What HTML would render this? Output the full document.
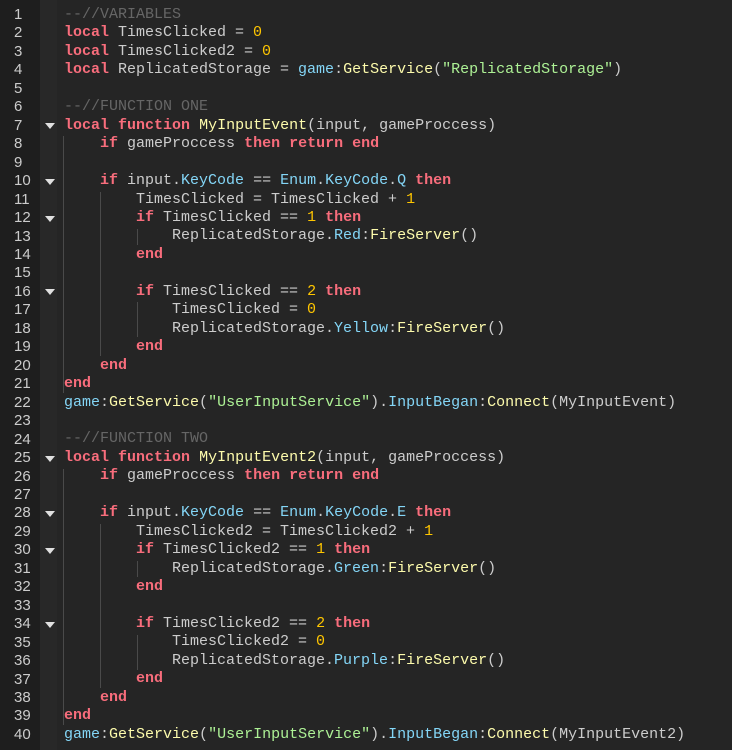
<!DOCTYPE html>
<html><head><meta charset="utf-8"><style>
html,body{margin:0;padding:0;}
body{width:732px;height:750px;background:#252525;position:relative;overflow:hidden;font-family:"Liberation Mono",monospace;font-size:15px;}
#nums{position:absolute;left:0;top:0;width:40px;height:750px;background:#1e1e1e;}
#fold{position:absolute;left:40px;top:0;width:17px;height:750px;background:#282828;}
.ln{position:absolute;left:14px;color:#cccccc;line-height:18.46px;font-family:"Liberation Sans",sans-serif;font-size:15px;}
.arr{position:absolute;left:45px;width:0;height:0;border-left:5px solid transparent;border-right:5px solid transparent;border-top:6px solid #e0e0e0;}
.g{position:absolute;width:1px;background:#4a4a4a;}
#code{position:absolute;left:64px;top:6px;margin:0;color:#cccccc;line-height:18.46px;white-space:pre;font-family:"Liberation Mono",monospace;font-size:15px;}
.k{color:#f86d7c;font-weight:bold}.c{color:#666666}.n{color:#ffc600}.s{color:#adf195}.b{color:#84d6f7}.y{color:#fdfbac}
</style></head><body>
<div id="nums"></div><div id="fold"></div>
<div id="ln"></div>
<pre id="code"><span class="c">--//VARIABLES</span>
<span class="k">local</span> TimesClicked = <span class="n">0</span>
<span class="k">local</span> TimesClicked2 = <span class="n">0</span>
<span class="k">local</span> ReplicatedStorage = <span class="b">game</span>:<span class="y">GetService</span>(<span class="s">"ReplicatedStorage"</span>)

<span class="c">--//FUNCTION ONE</span>
<span class="k">local</span> <span class="k">function</span> <span class="y">MyInputEvent</span>(input, gameProccess)
    <span class="k">if</span> gameProccess <span class="k">then</span> <span class="k">return</span> <span class="k">end</span>

    <span class="k">if</span> input.<span class="b">KeyCode</span> == <span class="b">Enum</span>.<span class="b">KeyCode</span>.<span class="b">Q</span> <span class="k">then</span>
        TimesClicked = TimesClicked + <span class="n">1</span>
        <span class="k">if</span> TimesClicked == <span class="n">1</span> <span class="k">then</span>
            ReplicatedStorage.<span class="b">Red</span>:<span class="y">FireServer</span>()
        <span class="k">end</span>

        <span class="k">if</span> TimesClicked == <span class="n">2</span> <span class="k">then</span>
            TimesClicked = <span class="n">0</span>
            ReplicatedStorage.<span class="b">Yellow</span>:<span class="y">FireServer</span>()
        <span class="k">end</span>
    <span class="k">end</span>
<span class="k">end</span>
<span class="b">game</span>:<span class="y">GetService</span>(<span class="s">"UserInputService"</span>).<span class="b">InputBegan</span>:<span class="y">Connect</span>(MyInputEvent)

<span class="c">--//FUNCTION TWO</span>
<span class="k">local</span> <span class="k">function</span> <span class="y">MyInputEvent2</span>(input, gameProccess)
    <span class="k">if</span> gameProccess <span class="k">then</span> <span class="k">return</span> <span class="k">end</span>

    <span class="k">if</span> input.<span class="b">KeyCode</span> == <span class="b">Enum</span>.<span class="b">KeyCode</span>.<span class="b">E</span> <span class="k">then</span>
        TimesClicked2 = TimesClicked2 + <span class="n">1</span>
        <span class="k">if</span> TimesClicked2 == <span class="n">1</span> <span class="k">then</span>
            ReplicatedStorage.<span class="b">Green</span>:<span class="y">FireServer</span>()
        <span class="k">end</span>

        <span class="k">if</span> TimesClicked2 == <span class="n">2</span> <span class="k">then</span>
            TimesClicked2 = <span class="n">0</span>
            ReplicatedStorage.<span class="b">Purple</span>:<span class="y">FireServer</span>()
        <span class="k">end</span>
    <span class="k">end</span>
<span class="k">end</span>
<span class="b">game</span>:<span class="y">GetService</span>(<span class="s">"UserInputService"</span>).<span class="b">InputBegan</span>:<span class="y">Connect</span>(MyInputEvent2)</pre>
<script>
var L=18.46,T=6,h='';
for(var i=1;i<=40;i++){h+='<div class="ln" style="top:'+(T+(i-1)*L)+'px">'+i+'</div>';}
[7,10,12,16,25,28,30,34].forEach(function(n){h+='<div class="arr" style="top:'+(T+(n-1)*L+6.5)+'px"></div>';});
[[63,8,21],[100,11,19],[137,13,13],[137,17,18],[63,26,39],[100,29,37],[137,31,31],[137,35,36]].forEach(function(g){
h+='<div class="g" style="left:'+g[0]+'px;top:'+(T+(g[1]-1)*L+1)+'px;height:'+((g[2]-g[1]+1)*L-2)+'px"></div>';});
document.getElementById('ln').innerHTML=h;
</script>
</body></html>
